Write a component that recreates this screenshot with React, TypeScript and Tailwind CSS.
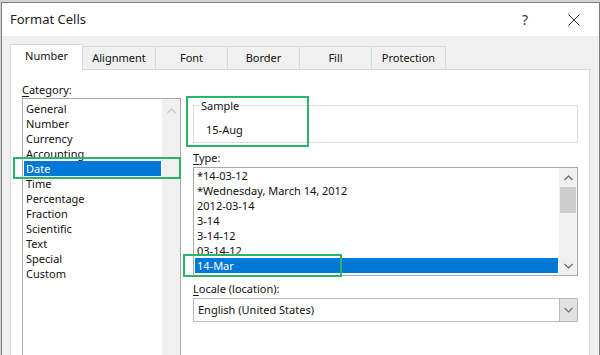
import { ReactNode } from 'react';

const CATEGORIES = [
  'General',
  'Number',
  'Currency',
  'Accounting',
  'Date',
  'Time',
  'Percentage',
  'Fraction',
  'Scientific',
  'Text',
  'Special',
  'Custom',
];

const TYPES = ['*14-03-12', '*Wednesday, March 14, 2012', '2012-03-14', '3-14', '3-14-12', '03-14-12', '14-Mar'];

const TABS: { label: string; w: string }[] = [
  { label: 'Number', w: 'w-[73px]' },
  { label: 'Alignment', w: 'w-[74px]' },
  { label: 'Font', w: 'w-[73px]' },
  { label: 'Border', w: 'w-[73px]' },
  { label: 'Fill', w: 'w-[73px]' },
  { label: 'Protection', w: 'w-[75px]' },
];

function Chevron({ up, color }: { up?: boolean; color: string }) {
  return (
    <svg width="9" height="6" viewBox="0 0 9 6" fill="none">
      <polyline
        points={up ? '0.5,5 4.5,1 8.5,5' : '0.5,1 4.5,5 8.5,1'}
        stroke={color}
        strokeWidth="1.1"
      />
    </svg>
  );
}

// first letter underlined, like the access keys in the dialog
function AccessLabel({ text }: { text: string }) {
  return (
    <div className="h-[15px] leading-[15px]">
      <span className="underline underline-offset-2">{text.charAt(0)}</span>
      {text.slice(1)}
    </div>
  );
}

function ListRow({ children, selected }: { children: ReactNode; selected?: boolean }) {
  return (
    <div
      className={`h-[15px] leading-[15px] px-[2px] whitespace-nowrap ${
        selected ? 'bg-[#0078d7] text-white' : ''
      }`}
    >
      {children}
    </div>
  );
}

function GreenBox({ className }: { className: string }) {
  return <div className={`absolute border-2 border-[#2ab466] pointer-events-none ${className}`} />;
}

export default function App() {
  return (
    <div className="relative w-[600px] h-[355px] overflow-hidden bg-[#d4d4d4] pl-px pt-[2px] text-[11px] text-[#111] font-['Noto_Sans',sans-serif]">
      <div className="h-full border-l border-t border-r border-[#7d7d7d] bg-[#f0f0f0] flex flex-col">
        {/* Title bar */}
        <div className="h-[33px] shrink-0 bg-white flex items-center pl-[8px]">
          <span className="text-[13px] text-[#222]">Format Cells</span>
          <span className="flex-1" />
          <span className="text-[14px] text-[#333] mr-[40px]">?</span>
          <svg width="12" height="12" viewBox="0 0 12 12" className="mr-[19px]">
            <path d="M0.5 0.5 L11.5 11.5 M11.5 0.5 L0.5 11.5" stroke="#333" strokeWidth="1" />
          </svg>
        </div>

        {/* Tabs */}
        <div className="flex items-end pl-[8px] mt-[8px] h-[25px] shrink-0">
          {TABS.map((tab, i) =>
            i === 0 ? (
              <div
                key={tab.label}
                className={`${tab.w} h-[26px] -mb-px relative z-10 bg-white border border-b-0 border-[#d9d9d9] flex items-center justify-center pb-[2px]`}
              >
                {tab.label}
              </div>
            ) : (
              <div
                key={tab.label}
                className={`${tab.w} h-[23px] -ml-px bg-[#f0f0f0] border border-b-0 border-[#d9d9d9] flex items-center justify-center`}
              >
                {tab.label}
              </div>
            )
          )}
        </div>

        {/* Panel */}
        <div className="ml-[8px] w-[580px] flex-1 bg-white border border-b-0 border-[#d9d9d9] flex pl-[11px] pr-[11px] pt-[12px]">
          {/* Category */}
          <div className="w-[159px] shrink-0 flex flex-col">
            <AccessLabel text="Category:" />
            <div className="mt-px h-[280px] border border-[#a8a8a8] flex">
              <div className="flex-1 pt-[2px] px-px">
                {CATEGORIES.map((c) => (
                  <ListRow key={c} selected={c === 'Date'}>
                    {c}
                  </ListRow>
                ))}
              </div>
              <div className="w-[18px] bg-[#f0f0f0] flex justify-center pt-[9px]">
                <div className="h-[6px]">
                  <Chevron up color="#c4c4c4" />
                </div>
              </div>
            </div>
          </div>

          {/* Right side */}
          <div className="ml-[12px] flex-1 flex flex-col">
            <div className="relative mt-[23px] h-[38px] border border-[#dcdcdc] pl-[12px] pt-[16px]">
              <span className="absolute -top-[8px] left-[6px] bg-white px-px leading-[15px]">Sample</span>
              <div className="leading-[15px]">15-Aug</div>
            </div>

            <div className="mt-[7px]">
              <AccessLabel text="Type:" />
            </div>
            <div className="mt-[2px] h-[109px] border border-[#a8a8a8] flex overflow-hidden">
              <div className="flex-1 px-px overflow-hidden">
                {TYPES.map((t) => (
                  <ListRow key={t} selected={t === '14-Mar'}>
                    {t}
                  </ListRow>
                ))}
              </div>
              <div className="w-[18px] bg-[#f0f0f0] flex flex-col items-center">
                <div className="h-[19px] flex items-center">
                  <Chevron up color="#606060" />
                </div>
                <div className="w-[16px] h-[26px] bg-[#cdcdcd]" />
                <div className="flex-1" />
                <div className="h-[19px] flex items-center">
                  <Chevron color="#606060" />
                </div>
              </div>
            </div>

            <div className="mt-[5px]">
              <AccessLabel text="Locale (location):" />
            </div>
            <div className="mt-[2px] h-[24px] border border-[#b9b9b9] flex">
              <div className="flex-1 pl-[4px] leading-[22px]">English (United States)</div>
              <div className="w-[18px] bg-[#e1e1e1] border-l border-[#b9b9b9] flex items-center justify-center">
                <Chevron color="#707070" />
              </div>
            </div>
          </div>
        </div>
      </div>

      {/* annotation boxes drawn over the dialog */}
      <GreenBox className="left-[13px] top-[157px] w-[168px] h-[22px]" />
      <GreenBox className="left-[186px] top-[96px] w-[123px] h-[51px]" />
      <GreenBox className="left-[183px] top-[254px] w-[159px] h-[23px]" />
    </div>
  );
}
